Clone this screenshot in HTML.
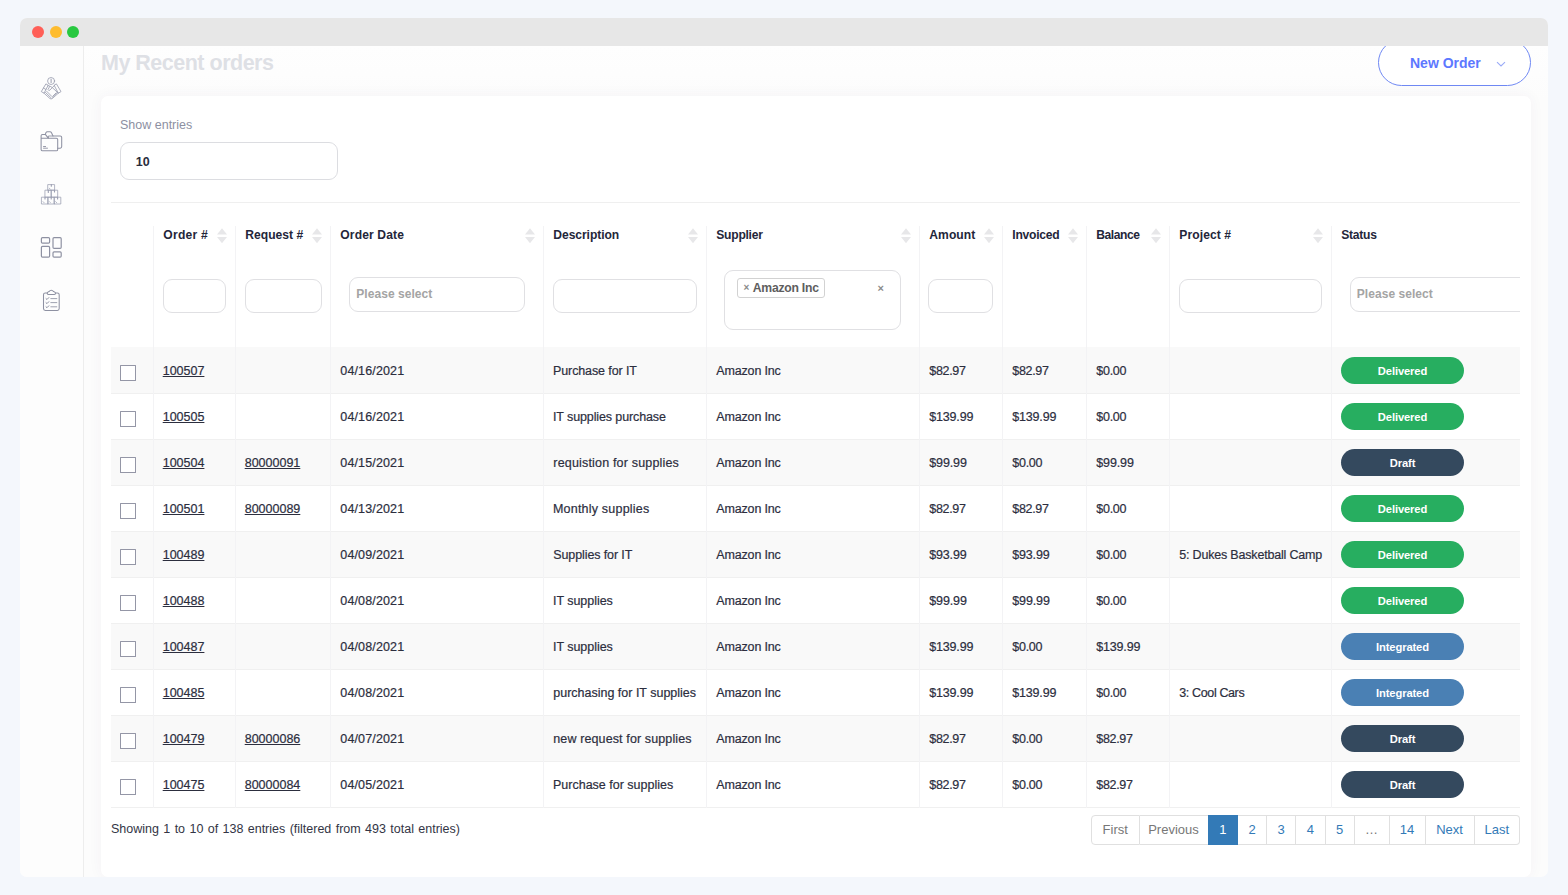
<!DOCTYPE html><html><head><meta charset="utf-8"><title>My Recent orders</title><style>
*{box-sizing:border-box}
html,body{margin:0;padding:0}
body{width:1568px;height:895px;overflow:hidden;background:#f4f7fc;font-family:"Liberation Sans",sans-serif;font-size:12.5px;color:#2c2e3e;position:relative}
.abs{position:absolute}
.win{position:absolute;left:20px;top:18px;width:1528px;height:859px;border-radius:7px;overflow:hidden;background:linear-gradient(#fefefe 28px,#fcfcfc 82px,#fcfcfc)}
.tb{position:absolute;left:0;top:0;width:100%;height:28px;background:#e7e7e7;z-index:5}
.dot{position:absolute;top:8.2px;width:12px;height:12px;border-radius:50%}
.side{position:absolute;left:0;top:28px;width:64px;height:831px;background:#fdfdfd;border-right:1px solid #ededed}
.title{position:absolute;left:81px;top:32px;font-size:21.5px;letter-spacing:-0.5px;font-weight:700;color:#dee0e5;white-space:nowrap;line-height:26px}
.btn{position:absolute;left:1358px;top:21px;width:153px;height:46.5px;border:1px solid #6f88f3;border-radius:24px;background:#fff;color:#5d78ff;font-weight:700;font-size:14px;line-height:46px;padding-left:31px;white-space:nowrap}
.card{position:absolute;left:80.5px;top:78px;width:1430.5px;height:781px;background:#fff;border-radius:7px;box-shadow:0 0 14px 1px rgba(82,63,105,0.04)}
.lbl{position:absolute;left:100px;top:99px;color:#8d90a2;font-size:12.5px;letter-spacing:0px;line-height:16px;white-space:nowrap}
.sel{position:absolute;left:100px;top:124px;width:218px;height:38px;border:1px solid #dcdde1;border-radius:9px;background:#fff;font-weight:700;line-height:38px;padding-left:14.8px;color:#2a2c3c}
.hr{position:absolute;left:91px;top:184px;width:1409px;height:1px;background:#efefef}
.tw{position:absolute;left:91px;top:208px;width:1409px;height:582px;overflow:hidden}
.c{position:absolute;white-space:nowrap;line-height:16px;-webkit-text-stroke:0.2px}
.vb{position:absolute;top:0;width:1px;height:582px;background:#f3f3f5}
.row{position:absolute;left:0;width:1409px;height:46px;border-top:1px solid #f0f0f0}
.row.odd{background:#f9f9f9}
.h{font-weight:700;color:#24263a;font-size:12.1px;-webkit-text-stroke:0}.in .c{-webkit-text-stroke:0}
.t{letter-spacing:-0.14px}.j{letter-spacing:-0.2px}.p{letter-spacing:-0.2px}.d{letter-spacing:0.2px}
.in{position:absolute;border:1px solid #e0e0e3;border-radius:9px;background:#fff}
.ph{color:#a4a4a4;font-weight:700;font-size:12px}
a{color:#2c2e3e;text-decoration:underline}
.cb{position:absolute;left:9px;width:16px;height:16px;border:1px solid #9496a6;background:#fff;border-radius:0.5px}
.badge{position:absolute;width:123px;height:27.3px;border-radius:14px;color:#fff;font-weight:700;font-size:11.2px;letter-spacing:-0.12px;line-height:29.3px;text-align:center}
.Delivered{background:#27ae60}.Draft{background:#34495e}.Integrated{background:#4a80b4}
.info{position:absolute;left:91px;top:802.5px;line-height:16px;white-space:nowrap;color:#333545;word-spacing:0.9px}
.pg{position:absolute;top:796.5px;height:30px;border:1px solid #e0e0e0;border-left:none;background:#fff;color:#337ab7;text-align:center;line-height:28px;font-size:13px}
.pg.dis{color:#777}
.pg.act{background:#337ab7;border-color:#337ab7;color:#fff}
.sort{position:absolute;width:10px;height:15.5px}
</style></head><body>
<div class="win">
<div class="tb"><div class="dot" style="left:12px;background:#ff5f57"></div><div class="dot" style="left:29.6px;background:#febc2e"></div><div class="dot" style="left:47.3px;background:#28c840"></div></div>
<div class="side"><svg style="position:absolute;left:0;top:0" width="64" height="300" viewBox="20 46 64 300" fill="none" stroke="#8e91a2" stroke-linecap="round" stroke-linejoin="round">
<!-- handshake -->
<g stroke-width="0.75" stroke="#8f93a7">
<circle cx="51.1" cy="81.0" r="3.5"/>
<path d="M51.1 79.2 V82.6" stroke-width="0.9"/>
<path d="M45.7 84.2 L41.3 91.6 L44.0 93.2 L48.0 85.6 Z"/>
<path d="M43.4 88.0 L45.9 89.5"/>
<path d="M56.6 84.2 L61.0 91.6 L58.3 93.2 L54.3 85.6 Z"/>
<path d="M48.0 85.6 L50.2 86.3 L52.3 87.6 L58.0 92.9"/>
<path d="M54.3 85.6 L52.3 87.6 L49.8 90.2 Q48.6 91.0 48.0 89.6 L49.6 86.6"/>
<path d="M44.0 93.2 L50.0 98.6 Q51.1 99.2 52.2 98.6 L58.3 93.2"/>
<path d="M45.4 92.4 L50.6 97.4 M46.6 91.2 L51.8 96.4 M52.0 97.6 L56.8 93.0 M53.0 96.0 L56.0 93.0"/>
</g>
<!-- folders -->
<g stroke-width="1.05">
<path d="M41.1 138.2 H56.3 Q57.7 138.2 57.7 139.6 V149.4 Q57.7 150.8 56.3 150.8 H42.5 Q41.1 150.8 41.1 149.4 V135.8 Q41.1 134.4 42.5 134.4 H45.3 L48.4 138.2"/>
<path d="M45.3 134.4 L46.0 132.6 Q46.4 131.8 47.3 131.8 H50.0 Q51.0 131.8 51.5 132.8 L53.0 136.0 H60.2 Q61.7 136.0 61.7 137.5 V146.6 Q61.7 148.2 60.2 148.2 H57.7"/>
<path d="M48.4 138.2 V136.0 H53.0" stroke-width="0.9"/>
<path d="M43.5 146.5 H45.6 M43.5 148.2 H47.5" stroke-width="0.9"/>
</g>
<!-- boxes -->
<g stroke-width="0.75" stroke="#9a9db0">
<rect x="48.1" y="184.6" width="6.5" height="5.6"/>
<rect x="45.3" y="190.2" width="6.1" height="7.0"/>
<rect x="51.4" y="190.2" width="6.3" height="7.0"/>
<rect x="41.8" y="197.2" width="6.3" height="6.8"/>
<rect x="48.1" y="197.2" width="6.3" height="6.8"/>
<rect x="54.4" y="197.2" width="6.4" height="6.8"/>
<path d="M51.3 184.6 V186.2 M48.3 190.2 V192.4 M54.5 190.2 V192.0 M45.0 197.2 V199.0 M51.2 197.2 V199.0 M57.6 197.2 V199.0" stroke-width="1.1"/>
<path d="M43.0 201.6 L44.2 202.8 M49.2 188.2 L50.2 189.0 M55.6 201.6 L56.8 202.8 M49.4 201.6 L50.4 202.6" stroke-width="0.7"/>
</g>
<!-- dashboard -->
<g stroke-width="1.2">
<rect x="41.4" y="237.6" width="8.2" height="5.5" rx="1.1"/>
<rect x="53.0" y="237.6" width="8.2" height="10.7" rx="1.1"/>
<rect x="41.4" y="246.4" width="8.2" height="10.8" rx="1.1"/>
<rect x="53.0" y="251.8" width="8.2" height="5.4" rx="1.1"/>
</g>
<!-- clipboard -->
<g stroke-width="1.05">
<path d="M47.2 292.9 H45.3 Q43.5 292.9 43.5 294.7 V308.6 Q43.5 310.4 45.3 310.4 H57.4 Q59.2 310.4 59.2 308.6 V294.7 Q59.2 292.9 57.4 292.9 H55.5"/>
<path d="M47.2 293.2 Q47.2 292.2 49.0 291.6 Q50.0 290.3 51.3 290.3 Q52.6 290.3 53.6 291.6 Q55.5 292.2 55.5 293.2 Q55.5 294.5 54.4 294.5 H48.3 Q47.2 294.5 47.2 293.2 Z"/>
<path d="M46.0 298.6 L47.0 299.5 L48.8 297.6 M46.0 302.7 L47.0 303.6 L48.8 301.7 M46.0 306.8 L47.0 307.7 L48.8 305.8" stroke-width="1.0"/>
<path d="M50.8 298.6 H56.8 M50.8 302.6 H56.8 M50.8 306.8 H56.8" stroke-width="0.85"/>
</g>
</svg>
</div>
<div class="title">My Recent orders</div>
<div class="btn">New Order<svg style="position:absolute;left:117px;top:21px" width="10" height="7" viewBox="0 0 10 7"><path d="M1 1.2 L5 5 L9 1.2" fill="none" stroke="#9aabf7" stroke-width="1.1"/></svg></div>
<div class="card"></div>
<div class="lbl">Show entries</div>
<div class="sel">10</div>
<div class="hr"></div>
<div class="tw">
<div class="row odd" style="top:121px;border-top-color:transparent"></div>
<div class="row" style="top:167px"></div>
<div class="row odd" style="top:213px"></div>
<div class="row" style="top:259px"></div>
<div class="row odd" style="top:305px"></div>
<div class="row" style="top:351px"></div>
<div class="row odd" style="top:397px"></div>
<div class="row" style="top:443px"></div>
<div class="row odd" style="top:489px"></div>
<div class="row" style="top:535px"></div>
<div class="row" style="top:581px;height:1px"></div>
<div class="vb" style="left:42.0px"></div>
<div class="vb" style="left:124.0px"></div>
<div class="vb" style="left:219.0px"></div>
<div class="vb" style="left:432.0px"></div>
<div class="vb" style="left:595.0px"></div>
<div class="vb" style="left:808.0px"></div>
<div class="vb" style="left:891.0px"></div>
<div class="vb" style="left:975.0px"></div>
<div class="vb" style="left:1058.0px"></div>
<div class="vb" style="left:1220.0px"></div>
<div class="c h" style="left:52.3px;top:1.0999999999999943px;letter-spacing:0.234px;">Order #</div>
<svg class="sort" style="left:105.5px;top:1.6500000000000057px" viewBox="0 0 10 15.5"><path d="M5 0.3 L10 6.6 H0 Z" fill="#e7e7e9"/><path d="M5 15.2 L10 8.9 H0 Z" fill="#e7e7e9"/></svg>
<div class="c h" style="left:134.3px;top:1.0999999999999943px;letter-spacing:0.016px;">Request #</div>
<svg class="sort" style="left:200.5px;top:1.6500000000000057px" viewBox="0 0 10 15.5"><path d="M5 0.3 L10 6.6 H0 Z" fill="#e7e7e9"/><path d="M5 15.2 L10 8.9 H0 Z" fill="#e7e7e9"/></svg>
<div class="c h" style="left:229.3px;top:1.0999999999999943px;letter-spacing:0.124px;">Order Date</div>
<svg class="sort" style="left:413.5px;top:1.6500000000000057px" viewBox="0 0 10 15.5"><path d="M5 0.3 L10 6.6 H0 Z" fill="#e7e7e9"/><path d="M5 15.2 L10 8.9 H0 Z" fill="#e7e7e9"/></svg>
<div class="c h" style="left:442.3px;top:1.0999999999999943px;letter-spacing:-0.064px;">Description</div>
<svg class="sort" style="left:576.5px;top:1.6500000000000057px" viewBox="0 0 10 15.5"><path d="M5 0.3 L10 6.6 H0 Z" fill="#e7e7e9"/><path d="M5 15.2 L10 8.9 H0 Z" fill="#e7e7e9"/></svg>
<div class="c h" style="left:605.3px;top:1.0999999999999943px;letter-spacing:-0.253px;">Supplier</div>
<svg class="sort" style="left:789.5px;top:1.6500000000000057px" viewBox="0 0 10 15.5"><path d="M5 0.3 L10 6.6 H0 Z" fill="#e7e7e9"/><path d="M5 15.2 L10 8.9 H0 Z" fill="#e7e7e9"/></svg>
<div class="c h" style="left:818.3px;top:1.0999999999999943px;letter-spacing:0.05px;">Amount</div>
<svg class="sort" style="left:872.5px;top:1.6500000000000057px" viewBox="0 0 10 15.5"><path d="M5 0.3 L10 6.6 H0 Z" fill="#e7e7e9"/><path d="M5 15.2 L10 8.9 H0 Z" fill="#e7e7e9"/></svg>
<div class="c h" style="left:901.3px;top:1.0999999999999943px;letter-spacing:-0.253px;">Invoiced</div>
<svg class="sort" style="left:956.5px;top:1.6500000000000057px" viewBox="0 0 10 15.5"><path d="M5 0.3 L10 6.6 H0 Z" fill="#e7e7e9"/><path d="M5 15.2 L10 8.9 H0 Z" fill="#e7e7e9"/></svg>
<div class="c h" style="left:985.3px;top:1.0999999999999943px;letter-spacing:-0.46px;">Balance</div>
<svg class="sort" style="left:1039.5px;top:1.6500000000000057px" viewBox="0 0 10 15.5"><path d="M5 0.3 L10 6.6 H0 Z" fill="#e7e7e9"/><path d="M5 15.2 L10 8.9 H0 Z" fill="#e7e7e9"/></svg>
<div class="c h" style="left:1068.3px;top:1.0999999999999943px;letter-spacing:0.08px;">Project #</div>
<svg class="sort" style="left:1201.5px;top:1.6500000000000057px" viewBox="0 0 10 15.5"><path d="M5 0.3 L10 6.6 H0 Z" fill="#e7e7e9"/><path d="M5 15.2 L10 8.9 H0 Z" fill="#e7e7e9"/></svg>
<div class="c h" style="left:1230.3px;top:1.0999999999999943px;letter-spacing:-0.267px;">Status</div>
<div class="in" style="left:52px;top:53px;width:63px;height:34px"></div>
<div class="in" style="left:134px;top:53px;width:76.5px;height:34px"></div>
<div class="in" style="left:238px;top:50.5px;width:176px;height:35.0px"><span class="c ph" style="left:6.3px;top:8px;letter-spacing:0.05px">Please select</span></div>
<div class="in" style="left:442px;top:53px;width:144px;height:34px"></div>
<div class="in" style="left:613px;top:44px;width:177px;height:60px"><span class="abs" style="left:12px;top:7px;height:20px;width:88px;border:1px solid #d2d2d2;border-radius:3px;"></span><span class="c" style="left:18.5px;top:9px;color:#8a8a8a;font-weight:700;font-size:10px">×</span><span class="c" style="left:27.8px;top:8.7px;color:#5e5e5e;font-weight:700;font-size:12.2px;letter-spacing:-0.25px">Amazon Inc</span><span class="c" style="left:152.5px;top:8.7px;color:#8a8a8a;font-weight:700;font-size:11px">×</span></div>
<div class="in" style="left:817px;top:53px;width:65px;height:34px"></div>
<div class="in" style="left:1068px;top:53px;width:143px;height:34px"></div>
<div class="in" style="left:1239px;top:51px;width:210px;height:34.5px"><span class="c ph" style="left:5.8px;top:8px;letter-spacing:0.05px">Please select</span></div>
<div class="cb" style="top:139px"></div>
<div class="c" style="left:51.7px;top:136.5px;"><a>100507</a></div>
<div class="c" style="left:229.3px;top:136.5px;letter-spacing:0.143px;">04/16/2021</div>
<div class="c" style="left:442.0px;top:136.5px;letter-spacing:-0.108px;">Purchase for IT</div>
<div class="c" style="left:605.3px;top:136.5px;letter-spacing:-0.161px;">Amazon Inc</div>
<div class="c" style="left:818.3px;top:136.5px;letter-spacing:-0.316px;">$82.97</div>
<div class="c" style="left:901.3px;top:136.5px;letter-spacing:-0.316px;">$82.97</div>
<div class="c" style="left:985.3px;top:136.5px;letter-spacing:-0.282px;">$0.00</div>
<div class="badge Delivered" style="left:1230px;top:131.1px">Delivered</div>
<div class="cb" style="top:185px"></div>
<div class="c" style="left:51.7px;top:182.5px;"><a>100505</a></div>
<div class="c" style="left:229.3px;top:182.5px;letter-spacing:0.143px;">04/16/2021</div>
<div class="c" style="left:442.0px;top:182.5px;letter-spacing:-0.115px;">IT supplies purchase</div>
<div class="c" style="left:605.3px;top:182.5px;letter-spacing:-0.161px;">Amazon Inc</div>
<div class="c" style="left:818.3px;top:182.5px;letter-spacing:-0.189px;">$139.99</div>
<div class="c" style="left:901.3px;top:182.5px;letter-spacing:-0.189px;">$139.99</div>
<div class="c" style="left:985.3px;top:182.5px;letter-spacing:-0.282px;">$0.00</div>
<div class="badge Delivered" style="left:1230px;top:177.1px">Delivered</div>
<div class="cb" style="top:231px"></div>
<div class="c" style="left:51.7px;top:228.5px;"><a>100504</a></div>
<div class="c" style="left:133.7px;top:228.5px;"><a>80000091</a></div>
<div class="c" style="left:229.3px;top:228.5px;letter-spacing:0.143px;">04/15/2021</div>
<div class="c" style="left:442.3px;top:228.5px;letter-spacing:0.18px;">requistion for supplies</div>
<div class="c" style="left:605.3px;top:228.5px;letter-spacing:-0.161px;">Amazon Inc</div>
<div class="c" style="left:818.3px;top:228.5px;letter-spacing:-0.136px;">$99.99</div>
<div class="c" style="left:901.3px;top:228.5px;letter-spacing:-0.282px;">$0.00</div>
<div class="c" style="left:985.3px;top:228.5px;letter-spacing:-0.136px;">$99.99</div>
<div class="badge Draft" style="left:1230px;top:223.1px">Draft</div>
<div class="cb" style="top:277px"></div>
<div class="c" style="left:51.7px;top:274.5px;"><a>100501</a></div>
<div class="c" style="left:133.7px;top:274.5px;"><a>80000089</a></div>
<div class="c" style="left:229.3px;top:274.5px;letter-spacing:0.143px;">04/13/2021</div>
<div class="c" style="left:442.0px;top:274.5px;letter-spacing:0.203px;">Monthly supplies</div>
<div class="c" style="left:605.3px;top:274.5px;letter-spacing:-0.161px;">Amazon Inc</div>
<div class="c" style="left:818.3px;top:274.5px;letter-spacing:-0.316px;">$82.97</div>
<div class="c" style="left:901.3px;top:274.5px;letter-spacing:-0.316px;">$82.97</div>
<div class="c" style="left:985.3px;top:274.5px;letter-spacing:-0.282px;">$0.00</div>
<div class="badge Delivered" style="left:1230px;top:269.1px">Delivered</div>
<div class="cb" style="top:323px"></div>
<div class="c" style="left:51.7px;top:320.5px;"><a>100489</a></div>
<div class="c" style="left:229.3px;top:320.5px;letter-spacing:0.143px;">04/09/2021</div>
<div class="c" style="left:442.3px;top:320.5px;letter-spacing:-0.111px;">Supplies for IT</div>
<div class="c" style="left:605.3px;top:320.5px;letter-spacing:-0.161px;">Amazon Inc</div>
<div class="c" style="left:818.3px;top:320.5px;letter-spacing:-0.176px;">$93.99</div>
<div class="c" style="left:901.3px;top:320.5px;letter-spacing:-0.176px;">$93.99</div>
<div class="c" style="left:985.3px;top:320.5px;letter-spacing:-0.282px;">$0.00</div>
<div class="c" style="left:1068.3px;top:320.5px;letter-spacing:-0.193px;">5: Dukes Basketball Camp</div>
<div class="badge Delivered" style="left:1230px;top:315.1px">Delivered</div>
<div class="cb" style="top:369px"></div>
<div class="c" style="left:51.7px;top:366.5px;"><a>100488</a></div>
<div class="c" style="left:229.3px;top:366.5px;letter-spacing:0.143px;">04/08/2021</div>
<div class="c" style="left:442.0px;top:366.5px;letter-spacing:-0.039px;">IT supplies</div>
<div class="c" style="left:605.3px;top:366.5px;letter-spacing:-0.161px;">Amazon Inc</div>
<div class="c" style="left:818.3px;top:366.5px;letter-spacing:-0.136px;">$99.99</div>
<div class="c" style="left:901.3px;top:366.5px;letter-spacing:-0.136px;">$99.99</div>
<div class="c" style="left:985.3px;top:366.5px;letter-spacing:-0.282px;">$0.00</div>
<div class="badge Delivered" style="left:1230px;top:361.1px">Delivered</div>
<div class="cb" style="top:415px"></div>
<div class="c" style="left:51.7px;top:412.5px;"><a>100487</a></div>
<div class="c" style="left:229.3px;top:412.5px;letter-spacing:0.143px;">04/08/2021</div>
<div class="c" style="left:442.0px;top:412.5px;letter-spacing:-0.039px;">IT supplies</div>
<div class="c" style="left:605.3px;top:412.5px;letter-spacing:-0.161px;">Amazon Inc</div>
<div class="c" style="left:818.3px;top:412.5px;letter-spacing:-0.189px;">$139.99</div>
<div class="c" style="left:901.3px;top:412.5px;letter-spacing:-0.282px;">$0.00</div>
<div class="c" style="left:985.3px;top:412.5px;letter-spacing:-0.189px;">$139.99</div>
<div class="badge Integrated" style="left:1230px;top:407.1px">Integrated</div>
<div class="cb" style="top:461px"></div>
<div class="c" style="left:51.7px;top:458.5px;"><a>100485</a></div>
<div class="c" style="left:229.3px;top:458.5px;letter-spacing:0.143px;">04/08/2021</div>
<div class="c" style="left:442.3px;top:458.5px;letter-spacing:-0.007px;">purchasing for IT supplies</div>
<div class="c" style="left:605.3px;top:458.5px;letter-spacing:-0.161px;">Amazon Inc</div>
<div class="c" style="left:818.3px;top:458.5px;letter-spacing:-0.189px;">$139.99</div>
<div class="c" style="left:901.3px;top:458.5px;letter-spacing:-0.189px;">$139.99</div>
<div class="c" style="left:985.3px;top:458.5px;letter-spacing:-0.282px;">$0.00</div>
<div class="c" style="left:1068.3px;top:458.5px;letter-spacing:-0.375px;">3: Cool Cars</div>
<div class="badge Integrated" style="left:1230px;top:453.1px">Integrated</div>
<div class="cb" style="top:507px"></div>
<div class="c" style="left:51.7px;top:504.5px;"><a>100479</a></div>
<div class="c" style="left:133.7px;top:504.5px;"><a>80000086</a></div>
<div class="c" style="left:229.3px;top:504.5px;letter-spacing:0.143px;">04/07/2021</div>
<div class="c" style="left:442.3px;top:504.5px;letter-spacing:0.12px;">new request for supplies</div>
<div class="c" style="left:605.3px;top:504.5px;letter-spacing:-0.161px;">Amazon Inc</div>
<div class="c" style="left:818.3px;top:504.5px;letter-spacing:-0.316px;">$82.97</div>
<div class="c" style="left:901.3px;top:504.5px;letter-spacing:-0.282px;">$0.00</div>
<div class="c" style="left:985.3px;top:504.5px;letter-spacing:-0.316px;">$82.97</div>
<div class="badge Draft" style="left:1230px;top:499.1px">Draft</div>
<div class="cb" style="top:553px"></div>
<div class="c" style="left:51.7px;top:550.5px;"><a>100475</a></div>
<div class="c" style="left:133.7px;top:550.5px;"><a>80000084</a></div>
<div class="c" style="left:229.3px;top:550.5px;letter-spacing:0.143px;">04/05/2021</div>
<div class="c" style="left:442.0px;top:550.5px;letter-spacing:-0.003px;">Purchase for supplies</div>
<div class="c" style="left:605.3px;top:550.5px;letter-spacing:-0.161px;">Amazon Inc</div>
<div class="c" style="left:818.3px;top:550.5px;letter-spacing:-0.316px;">$82.97</div>
<div class="c" style="left:901.3px;top:550.5px;letter-spacing:-0.282px;">$0.00</div>
<div class="c" style="left:985.3px;top:550.5px;letter-spacing:-0.316px;">$82.97</div>
<div class="badge Draft" style="left:1230px;top:545.1px">Draft</div>
</div>
<div class="info">Showing 1 to 10 of 138 entries (filtered from 493 total entries)</div>
<div class="pg dis" style="left:1071px;width:48.5px;border-left:1px solid #e0e0e0;border-radius:4px 0 0 4px;">First</div>
<div class="pg dis" style="left:1119.5px;width:69.0px;">Previous</div>
<div class="pg act" style="left:1188px;width:30.5px;">1</div>
<div class="pg " style="left:1218px;width:29px;">2</div>
<div class="pg " style="left:1247px;width:29px;">3</div>
<div class="pg " style="left:1276px;width:29.5px;">4</div>
<div class="pg " style="left:1305.5px;width:29.0px;">5</div>
<div class="pg dis" style="left:1334.5px;width:35.0px;">…</div>
<div class="pg " style="left:1369.5px;width:36.0px;">14</div>
<div class="pg " style="left:1405.5px;width:49.0px;">Next</div>
<div class="pg " style="left:1454.5px;width:45.5px;border-radius:0 4px 4px 0;">Last</div>
</div></body></html>
